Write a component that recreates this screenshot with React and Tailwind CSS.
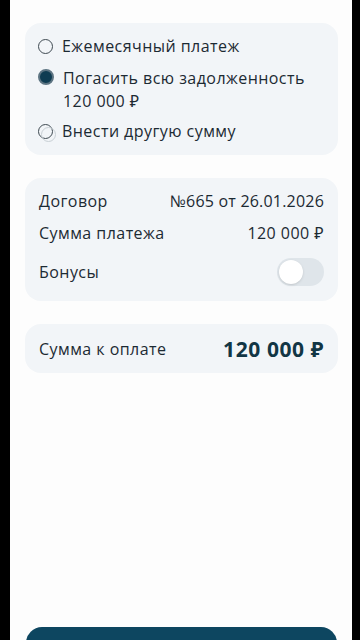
import React, { useState } from "react";

const font = { fontFamily: '"Open Sans", "Noto Sans", Arial, sans-serif' };

function Radio({ checked, ghost }) {
  if (checked) {
    return (
      <span className="flex h-[16px] w-[16px] shrink-0 items-center justify-center rounded-full border-[2px] border-[#5d7482] bg-[#0f3c52]" />
    );
  }
  return (
    <span className="relative h-[15px] w-[15px] shrink-0 rounded-full border-[1.5px] border-[#3f4a52]">
      {ghost && (
        <span className="absolute left-[2px] top-[2px] h-[15px] w-[15px] rounded-full border-[1.5px] border-[#c9d0d5]" />
      )}
    </span>
  );
}

export default function App() {
  const [choice, setChoice] = useState(1);
  const [bonus, setBonus] = useState(false);

  return (
    <div className="flex h-[640px] w-[360px] overflow-hidden bg-black" style={font}>
      <div className="ml-[10px] flex h-full w-[342px] flex-col bg-[#fdfdfd] pl-[15px] pr-[14px] pt-[23px] text-[16px] tracking-[0.45px] text-[#1c2a33]">
        {/* payment options */}
        <div className="flex flex-col rounded-[16px] bg-[#f2f5f8] pb-[14px] pl-[13px] pt-[13px]">
          <button className="flex items-center gap-[9px] text-left" onClick={() => setChoice(0)}>
            <Radio checked={choice === 0} />
            <span className="leading-[20px]">Ежемесячный платеж</span>
          </button>
          <button className="mt-[11px] flex items-start gap-[9px] text-left" onClick={() => setChoice(1)}>
            <span className="pt-[2px]">
              <Radio checked={choice === 1} />
            </span>
            <span className="leading-[23px]">
              Погасить всю задолженность
              <br />
              120 000 ₽
            </span>
          </button>
          <button className="mt-[8px] flex items-center gap-[9px] text-left" onClick={() => setChoice(2)}>
            <Radio checked={choice === 2} ghost />
            <span className="leading-[20px]">Внести другую сумму</span>
          </button>
        </div>

        {/* contract info */}
        <div className="mt-[23px] flex flex-col rounded-[16px] bg-[#f2f5f8] px-[14px] pb-[15px] pt-[13px]">
          <div className="flex items-center justify-between leading-[20px]">
            <span>Договор</span>
            <span className="tracking-[0.2px]">№665 от 26.01.2026</span>
          </div>
          <div className="mt-[12px] flex items-center justify-between leading-[20px]">
            <span>Сумма платежа</span>
            <span>120 000 ₽</span>
          </div>
          <div className="mt-[15px] flex h-[28px] items-center justify-between leading-[20px]">
            <span>Бонусы</span>
            <button
              onClick={() => setBonus(!bonus)}
              className={
                "flex h-[28px] w-[47px] items-center rounded-full p-[2px] " +
                (bonus ? "justify-end bg-[#0f4a63]" : "justify-start bg-[#dfe5ea]")
              }
            >
              <span className="h-[24px] w-[24px] rounded-full bg-white shadow-sm" />
            </button>
          </div>
        </div>

        {/* total */}
        <div className="mt-[23px] flex h-[49px] items-center justify-between rounded-[16px] bg-[#f2f5f8] px-[14px]">
          <span className="font-medium leading-[22px]">Сумма к оплате</span>
          <span className="text-[21px] font-bold leading-[24px] tracking-[0.6px] text-[#123645]">120 000 ₽</span>
        </div>

        <div className="flex-1" />

        <button className="mx-[1px] mb-[-40px] h-[53px] shrink-0 rounded-[16px] bg-[#0d4660] text-white" />
      </div>
    </div>
  );
}
